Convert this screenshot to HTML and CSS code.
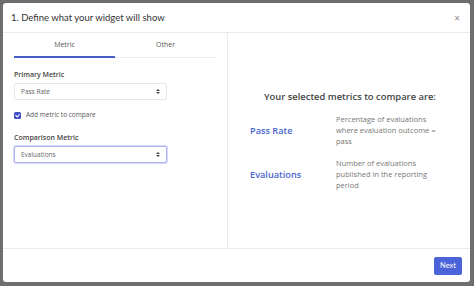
FILE: index.html
```html
<!DOCTYPE html>
<html lang="en">

<head>
    <meta charset="UTF-8">
    <title>Define widget</title>
    <link rel="stylesheet" href="styles.css">
</head>

<body>
    <div class="modal">
        <div class="header">
            <h1>1. Define what your widget will show</h1>
            <span class="close">&times;</span>
        </div>
        <div class="content">
            <div class="left">
                <div class="tabs">
                    <span class="selected">Metric</span>
                    <span>Other</span>
                </div>
                <div class="form">
                    <label class="title">Primary Metric</label>
                    <div class="select">Pass Rate<i></i></div>
                    <label class="check"><b></b>Add metric to compare</label>
                    <label class="title">Comparison Metric</label>
                    <div class="select focus">Evaluations<i></i></div>
                </div>
            </div>
            <div class="right">
                <h2>Your selected metrics to compare are:</h2>
                <div class="row">
                    <div class="name">Pass Rate</div>
                    <div class="desc">Percentage of evaluations where evaluation outcome = pass</div>
                </div>
                <div class="row">
                    <div class="name">Evaluations</div>
                    <div class="desc">Number of evaluations published in the reporting period</div>
                </div>
            </div>
        </div>
        <div class="footer">
            <button>Next</button>
        </div>
    </div>
</body>

</html>
```
FILE: styles.css
```css
* {
    margin: 0;
    padding: 0;
    box-sizing: border-box;
}

body {
    height: 100vh;
    background-color: #6e6e6e;
    padding: 3px 4px 4px 3px;
    font-family: "Open Sans", sans-serif;
}

.modal {
    width: 467px;
    height: 279px;
    background-color: #fff;
    border-radius: 3px;
    display: flex;
    flex-direction: column;
}

.header {
    height: 30px;
    border-bottom: 1px solid #eaeaea;
    display: flex;
    align-items: center;
    justify-content: space-between;
    padding: 0 10px 0 8px;
}

.header h1 {
    font-family: Lato, sans-serif;
    font-size: 9.5px;
    font-weight: 400;
    color: #333;
}

.close {
    font-size: 10px;
    color: #888;
}

.content {
    flex: 1;
    display: flex;
    border-bottom: 1px solid #eaeaea;
}

.left {
    width: 225px;
    border-right: 1px solid #ececec;
}

.tabs {
    margin: 0 11px;
    display: flex;
}

.tabs span {
    width: 50%;
    height: 25px;
    line-height: 24px;
    text-align: center;
    font-size: 7px;
    color: #555;
    border-bottom: 1px solid #ececec;
}

.tabs .selected {
    border-bottom: 2px solid #4a5ec9;
}

.form {
    padding: 11px 11px 0 11px;
}

.form .title {
    display: block;
    font-size: 7px;
    font-weight: 600;
    color: #444;
    line-height: 12px;
}

.select {
    width: 153px;
    height: 17px;
    margin-top: 2px;
    border: 1px solid #e6e6e6;
    border-radius: 2px;
    font-size: 6.5px;
    color: #666;
    line-height: 15px;
    padding-left: 6px;
    position: relative;
}

.select i {
    position: absolute;
    right: 6px;
    top: 5px;
    width: 0;
    height: 0;
    border-left: 2px solid transparent;
    border-right: 2px solid transparent;
    border-bottom: 2px solid #444;
}

.select i::after {
    content: '';
    position: absolute;
    left: -2px;
    top: 3px;
    border-left: 2px solid transparent;
    border-right: 2px solid transparent;
    border-top: 2px solid #444;
}

.select.focus {
    border-color: #aeb4ee;
    box-shadow: 0 0 0 1px #d7dafa;
}

.check {
    display: flex;
    align-items: center;
    margin: 9px 0 11px;
    font-size: 6.5px;
    color: #555;
    line-height: 12px;
}

.check b {
    width: 7px;
    height: 7px;
    border-radius: 1.5px;
    background-color: #4150c8;
    margin-right: 5px;
    position: relative;
}

.check b::after {
    content: '';
    position: absolute;
    left: 2px;
    top: 1px;
    width: 2px;
    height: 3px;
    border-right: 1px solid #fff;
    border-bottom: 1px solid #fff;
    transform: rotate(45deg);
}

.right {
    flex: 1;
    padding: 57px 0 0 22px;
}

.right h2 {
    font-size: 9.4px;
    font-weight: 600;
    color: #444;
    text-align: center;
    padding-right: 20px;
    margin-bottom: 11px;
}

.row {
    display: flex;
    align-items: center;
    margin-bottom: 11px;
}

.name {
    width: 86px;
    font-size: 9.2px;
    font-weight: 600;
    color: #4a66cc;
}

.desc {
    width: 100px;
    font-size: 7.5px;
    color: #777;
    line-height: 11px;
}

.footer {
    height: 33px;
    display: flex;
    align-items: center;
    justify-content: flex-end;
    padding-right: 8px;
}

.footer button {
    width: 28px;
    height: 18px;
    border: none;
    border-radius: 2px;
    background-color: #4a63d9;
    color: #fff;
    font-family: Lato, sans-serif;
    font-size: 7.5px;
}
```
